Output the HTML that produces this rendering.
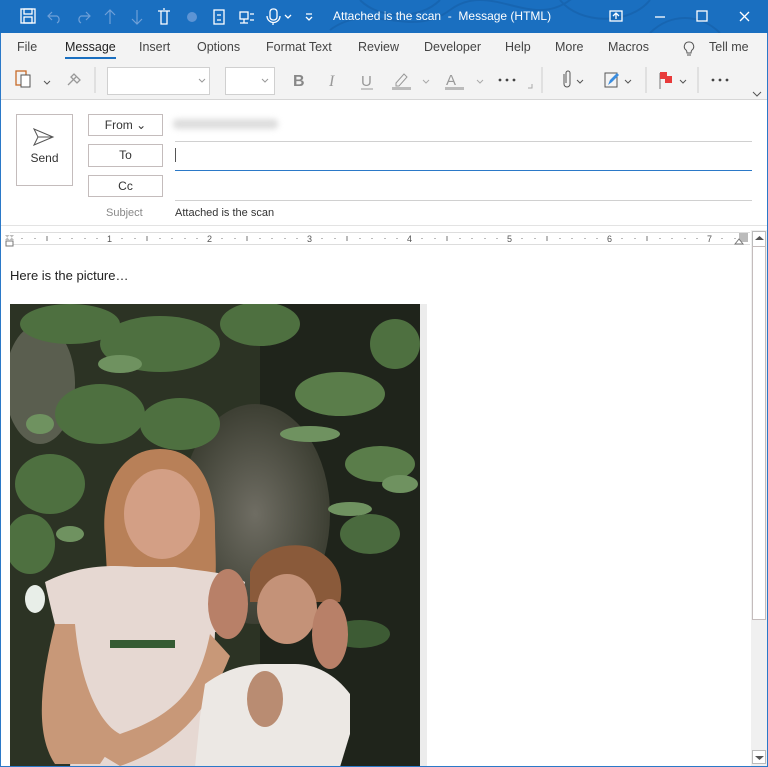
<!DOCTYPE html>
<html><head><meta charset="utf-8">
<style>
*{box-sizing:border-box;margin:0;padding:0}
body{width:768px;height:767px;overflow:hidden;background:#fff;font-family:"Segoe UI","Liberation Sans",sans-serif;position:relative}
.abs{position:absolute}
#title{left:0;top:0;width:768px;height:33px;background:#1a6fc0}
#title .t{left:333px;top:9px;color:#fff;font-size:12px;white-space:nowrap}
#tabs{left:1px;top:33px;width:766px;height:30px;background:#f3f3f3}
.tab{position:absolute;top:7px;font-size:12.5px;color:#444}
#rib{left:1px;top:63px;width:766px;height:37px;background:#f3f3f3;border-bottom:1px solid #d6d6d6}
.box{position:absolute;background:#fff;border:1px solid #d0d0d0}
.btn{position:absolute;border:1px solid #c4bcbc;background:#fff;font-size:12px;color:#333;text-align:center}
.line{position:absolute;height:1px;background:#d0d0d0}
#frame{left:0;top:33px;width:768px;height:734px;border:1px solid #2b79c8;border-top:none;pointer-events:none}
.g{fill:none;stroke:#fff;stroke-width:1.3}
</style></head><body>
<div id="title" class="abs">
<svg class="abs" style="left:0;top:0" width="768" height="33">
<g opacity=".18" fill="none" stroke="#0a3a70" stroke-width="2"><path d="M330 30c40-30 80 10 120-20s80 20 120-10 80 15 120-10 60 0 78 5"/><path d="M360 0c20 20 60 20 80 0M560 0c20 25 70 25 90 0M650 33c20-20 50-20 70 0"/></g>
<rect x="21" y="9" width="14" height="14" class="g"/><rect x="24" y="9" width="8" height="5" class="g"/><rect x="24" y="17" width="8" height="6" class="g"/>
<path d="M52 12l-4 4 4 4M49 16h8a4 4 0 010 7" stroke="#6fa0d8" fill="none" stroke-width="1.2"/>
<path d="M86 12l4 4-4 4M89 16h-8a4 4 0 000 7" stroke="#6fa0d8" fill="none" stroke-width="1.2"/>
<path d="M110 24V10M105 15l5-5 5 5" stroke="#6fa0d8" fill="none" stroke-width="1.2"/>
<path d="M137 10v14M132 19l5 5 5-5" stroke="#6fa0d8" fill="none" stroke-width="1.2"/>
<path d="M158 11h12M161 11v13h6V11M163 9h2" class="g"/>
<circle cx="192" cy="17" r="5" fill="#5d94d4"/>
<rect x="214" y="10" width="10" height="14" class="g"/><path d="M217 15h4M217 20h4" class="g"/>
<rect x="240" y="12" width="8" height="7" class="g"/><path d="M244 19v4M240 23h8M250 14h4M250 20h4" class="g"/>
<rect x="270" y="9" width="7" height="11" rx="3" class="g"/><path d="M267 16a6 6 0 0013 0M273 22v3" class="g"/>
<path d="M285 15l3 3 3-3" class="g"/><path d="M306 14h6M306 17l3 3 3-3" class="g"/>
<rect x="610" y="11" width="12" height="10" class="g"/><path d="M616 19v-5M613 16l3-3 3 3" class="g"/>
<path d="M655 17h10" class="g"/><rect x="697" y="11" width="10" height="10" class="g"/><path d="M740 12l9 9M749 12l-9 9" class="g"/>
</svg>
<div class="abs t">Attached is the scan&nbsp; -&nbsp; Message (HTML)</div>
</div>
<div id="tabs" class="abs">
<span class="tab" style="left:16px">File</span>
<span class="tab" style="left:64px;color:#222">Message</span>
<div class="abs" style="left:64px;top:24px;width:51px;height:2px;background:#1a6fc0"></div>
<span class="tab" style="left:138px">Insert</span>
<span class="tab" style="left:196px">Options</span>
<span class="tab" style="left:265px">Format Text</span>
<span class="tab" style="left:357px">Review</span>
<span class="tab" style="left:423px">Developer</span>
<span class="tab" style="left:504px">Help</span>
<span class="tab" style="left:554px">More</span>
<span class="tab" style="left:607px">Macros</span>
<svg class="abs" style="left:682px;top:8px" width="12" height="16"><path d="M6 1a4.5 4.5 0 00-3 8c1 1 1 2 1 3h4c0-1 0-2 1-3a4.5 4.5 0 00-3-8zM4 14h4" fill="none" stroke="#555"/></svg>
<span class="tab" style="left:708px">Tell me</span>
</div>
<div id="rib" class="abs">
<svg class="abs" style="left:0;top:0" width="766" height="37">
<rect x="15" y="8" width="10" height="14" fill="none" stroke="#c86a28" stroke-width="1.3"/><rect x="20" y="12" width="9" height="12" fill="#fff" stroke="#555"/>
<path d="M43 18l3 3 3-3" fill="none" stroke="#555"/>
<path d="M67 22l8-8M70 14l6 6 3-3-6-6z" fill="none" stroke="#999" stroke-width="1.3"/>
<line x1="94" y1="4" x2="94" y2="30" stroke="#ccc"/>
<path d="M198 16l3 3 3-3M261 16l3 3 3-3" fill="none" stroke="#999"/>
<text x="292" y="23" font-size="16" font-weight="bold" fill="#888" font-family="Liberation Sans">B</text>
<text x="328" y="23" font-size="16" font-style="italic" fill="#999" font-family="Liberation Serif">I</text>
<text x="360" y="23" font-size="15" fill="#999" font-family="Liberation Sans">U</text><line x1="360" y1="26" x2="372" y2="26" stroke="#999"/>
<path d="M395 20l8-9 3 3-8 9h-3z" fill="none" stroke="#999"/><rect x="391" y="24" width="19" height="3" fill="#bbb"/>
<path d="M422 17l3 3 3-3" fill="none" stroke="#aaa"/>
<text x="445" y="22" font-size="15" fill="#999" font-family="Liberation Sans">A</text><rect x="444" y="24" width="19" height="3" fill="#bbb"/>
<path d="M476 17l3 3 3-3" fill="none" stroke="#aaa"/>
<circle cx="499" cy="17" r="1.4" fill="#444"/><circle cx="506" cy="17" r="1.4" fill="#444"/><circle cx="513" cy="17" r="1.4" fill="#444"/>
<path d="M527 25h4v-4" fill="none" stroke="#aaa"/>
<line x1="541" y1="4" x2="541" y2="30" stroke="#ccc"/>
<path d="M563 11v10a3 3 0 006 0V10a2 2 0 00-4 0v10" fill="none" stroke="#555"/>
<path d="M576 17l3 3 3-3" fill="none" stroke="#555"/>
<rect x="604" y="10" width="12" height="14" fill="none" stroke="#555"/><path d="M607 22l2-5 7-7 2 2-7 7z" fill="#3a8de0"/>
<path d="M624 17l3 3 3-3" fill="none" stroke="#555"/>
<line x1="645" y1="4" x2="645" y2="30" stroke="#ccc"/>
<path d="M659 10v16" stroke="#777"/><rect x="659" y="9" width="7" height="7" fill="#e83a3a"/><rect x="664" y="13" width="7" height="7" fill="#e83a3a"/>
<path d="M679 17l3 3 3-3" fill="none" stroke="#555"/>
<line x1="697" y1="4" x2="697" y2="30" stroke="#ccc"/>
<circle cx="712" cy="17" r="1.4" fill="#444"/><circle cx="719" cy="17" r="1.4" fill="#444"/><circle cx="726" cy="17" r="1.4" fill="#444"/>
<path d="M752 29l4 4 4-4" fill="none" stroke="#555"/>
</svg>
<div class="box" style="left:106px;top:4px;width:103px;height:28px"></div>
<div class="box" style="left:224px;top:4px;width:50px;height:28px"></div>
<svg class="abs" style="left:0;top:0" width="300" height="37"><path d="M198 16l3 3 3-3M261 16l3 3 3-3" fill="none" stroke="#999"/></svg>
</div>
<!-- header -->
<div class="btn" style="left:16px;top:114px;width:57px;height:72px;padding-top:36px">Send</div>
<svg class="abs" style="left:33px;top:128px" width="22" height="18"><path d="M1 1l19 8-19 8 4-8z M5 9h15" fill="none" stroke="#555"/></svg>
<div class="btn" style="left:88px;top:114px;width:75px;height:22px;line-height:20px">From &#8964;</div>
<div class="btn" style="left:88px;top:144px;width:75px;height:23px;line-height:21px">To</div>
<div class="btn" style="left:88px;top:175px;width:75px;height:22px;line-height:20px">Cc</div>
<div class="abs" style="left:173px;top:119px;width:105px;height:10px;background:#ddd;filter:blur(3px);border-radius:4px"></div>
<div class="line" style="left:175px;top:141px;width:577px"></div>
<div class="abs" style="left:175px;top:148px;width:1px;height:14px;background:#555"></div>
<div class="line" style="left:175px;top:170px;width:577px;background:#2b79c8"></div>
<div class="line" style="left:175px;top:200px;width:577px"></div>
<div class="abs" style="left:106px;top:207px;font-size:11px;color:#888">Subject</div>
<div class="abs" style="left:175px;top:207px;font-size:11px;color:#333">Attached is the scan</div>
<div class="line" style="left:1px;top:225px;width:766px;background:#e3e3e3"></div>
<!-- ruler -->
<div class="line" style="left:10px;top:232px;width:740px;background:#ddd"></div>
<div class="line" style="left:10px;top:244px;width:740px;background:#ddd"></div>
<svg class="abs" style="left:0;top:232px" width="752" height="18" font-family="Liberation Sans" font-size="9" fill="#555">
<path d="M5 3h9l-4.5 5zM5 8h9l-4.5-5" fill="#bbb"/><rect x="6" y="9" width="7" height="5" fill="#fff" stroke="#777"/>
<g fill="#777">
<script></script>
</g>
<g stroke="#777">
<path d="M22 6v1M35 6v1M60 6v1M72 6v1M85 6v1M97 6v1M122 6v1M135 6v1M147 6v1M160 6v1M172 6v1M185 6v1M197 6v1M222 6v1M235 6v1M247 6v1M260 6v1M272 6v1M285 6v1M297 6v1M322 6v1M335 6v1M347 6v1M360 6v1M372 6v1M385 6v1M397 6v1M422 6v1M435 6v1M447 6v1M460 6v1M472 6v1M485 6v1M497 6v1M522 6v1M535 6v1M547 6v1M560 6v1M572 6v1M585 6v1M597 6v1M622 6v1M635 6v1M647 6v1M660 6v1M672 6v1M685 6v1M697 6v1M722 6v1M735 6v1"/>
<path d="M47 4v5M147 4v5M247 4v5M347 4v5M447 4v5M547 4v5M647 4v5"/>
</g>
<text x="107" y="10">1</text><text x="207" y="10">2</text><text x="307" y="10">3</text><text x="407" y="10">4</text><text x="507" y="10">5</text><text x="607" y="10">6</text><text x="707" y="10">7</text>
<rect x="739" y="1" width="9" height="9" fill="#bbb"/><path d="M735 12l4-5 4 5z" fill="#fff" stroke="#777"/>
</svg>
<!-- scrollbar -->
<div class="abs" style="left:751px;top:230px;width:16px;height:536px;background:#f0f0f0"></div>
<div class="abs" style="left:752px;top:231px;width:14px;height:16px;border:1px solid #bbb;background:#fff"></div>
<svg class="abs" style="left:755px;top:235px" width="9" height="6"><path d="M0 5l4.5-4 4.5 4z" fill="#555"/></svg>
<div class="abs" style="left:752px;top:246px;width:14px;height:374px;border:1px solid #c4bcbc;background:#fff"></div>
<div class="abs" style="left:752px;top:750px;width:14px;height:14px;border:1px solid #bbb;background:#fff"></div>
<svg class="abs" style="left:755px;top:755px" width="9" height="6"><path d="M0 1l4.5 4 4.5-4z" fill="#555"/></svg>
<div class="abs" style="left:10px;top:268px;font-size:13px;color:#222">Here is the picture…</div>
<!-- photo -->
<div class="abs" style="left:419px;top:304px;width:8px;height:463px;background:#ececec"></div>
<svg class="abs" style="left:10px;top:304px" width="410" height="463">
<defs><radialGradient id="rk" cx=".5" cy=".5" r=".5"><stop offset="0" stop-color="#6f6d63"/><stop offset="1" stop-color="#3d3f33"/></radialGradient></defs>
<rect width="410" height="463" fill="#2c3324"/>
<rect x="250" y="0" width="160" height="463" fill="#1f241b"/>
<ellipse cx="245" cy="210" rx="75" ry="110" fill="url(#rk)"/>
<ellipse cx="30" cy="80" rx="35" ry="60" fill="#5a5e4f"/>
<g fill="#4e7040">
<ellipse cx="60" cy="20" rx="50" ry="20"/><ellipse cx="150" cy="40" rx="60" ry="28"/><ellipse cx="250" cy="20" rx="40" ry="22"/><ellipse cx="90" cy="110" rx="45" ry="30"/><ellipse cx="170" cy="120" rx="40" ry="26"/><ellipse cx="40" cy="180" rx="35" ry="30"/><ellipse cx="20" cy="240" rx="25" ry="30"/><ellipse cx="330" cy="90" rx="45" ry="22" fill="#5a7d4a"/><ellipse cx="370" cy="160" rx="35" ry="18" fill="#5a7d4a"/><ellipse cx="360" cy="230" rx="30" ry="20" fill="#4a6a3e"/><ellipse cx="385" cy="40" rx="25" ry="25"/><ellipse cx="350" cy="330" rx="30" ry="14" fill="#3d5b34"/>
</g>
<g fill="#6f9260"><ellipse cx="110" cy="60" rx="22" ry="9"/><ellipse cx="300" cy="130" rx="30" ry="8"/><ellipse cx="390" cy="180" rx="18" ry="9"/><ellipse cx="340" cy="205" rx="22" ry="7"/><ellipse cx="30" cy="120" rx="14" ry="10"/><ellipse cx="60" cy="230" rx="14" ry="8"/></g>
<!-- girl -->
<path d="M150 145c-40 0-60 40-55 90 3 40 0 60 20 70h80c15-20 10-50 10-80 0-50-20-80-55-80z" fill="#b88058"/>
<ellipse cx="152" cy="210" rx="38" ry="45" fill="#d39f85"/>
<path d="M35 278c30-15 60-18 90-15h40c30 5 55 5 70 15l-10 50-20 0-5 135H60l5-80c-10-20-20-60-30-105z" fill="#e6d8d2"/>
<path d="M45 320c-15 60-20 110 0 140h45l20-30c-20-10-40-50-45-110z" fill="#c89878"/>
<path d="M200 330c-10 50-30 80-90 100l-20 20 20 12c60-20 90-60 110-110z" fill="#c89878"/>
<rect x="100" y="336" width="65" height="8" fill="#355b33"/>
<!-- boy -->
<path d="M240 268c10-25 40-30 60-25 25 10 35 30 30 55h-90z" fill="#8a5a3a"/>
<ellipse cx="277" cy="305" rx="30" ry="35" fill="#c49278"/>
<ellipse cx="218" cy="300" rx="20" ry="35" fill="#b88068"/>
<ellipse cx="320" cy="330" rx="18" ry="35" fill="#b88068"/>
<path d="M195 380c20-15 40-20 60-20h30c20 0 40 10 55 30v40l-10 33H185l5-50z" fill="#ece8e4"/>
<ellipse cx="255" cy="395" rx="18" ry="28" fill="#b98c72"/>
<ellipse cx="25" cy="295" rx="10" ry="14" fill="#e8eee8"/>
</svg>
<div id="frame" class="abs"></div>
</body></html>
